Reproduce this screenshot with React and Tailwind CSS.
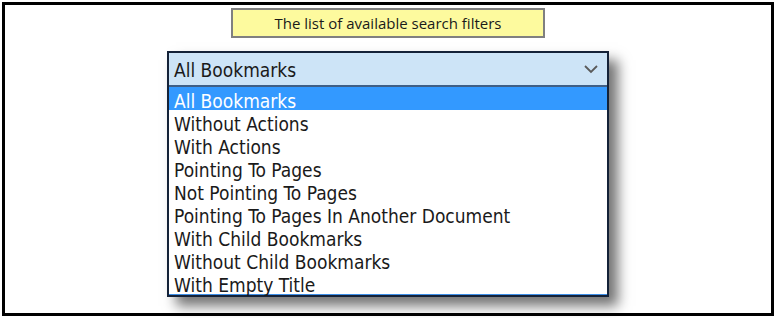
export default function App() {
  const items = [
    "All Bookmarks",
    "Without Actions",
    "With Actions",
    "Pointing To Pages",
    "Not Pointing To Pages",
    "Pointing To Pages In Another Document",
    "With Child Bookmarks",
    "Without Child Bookmarks",
    "With Empty Title",
  ];
  return (
    <div className="w-[774px] h-[318px] bg-white pt-[2px] pl-[2px]">
      <div className="w-[772px] h-[314px] border-[3px] border-black flex flex-col items-center">
        <div
          className="mt-[3px] w-[314px] h-[30px] bg-[#fdfa9e] border-2 border-[#808080] flex items-center justify-center text-[15px] text-[#1a1a1a]"
          style={{ fontFamily: '"Open Sans", "Noto Sans", sans-serif' }}
        >
          The list of available search filters
        </div>
        <div
          className="mt-[13px] w-[442px] border-2 border-[#142238] bg-white shadow-[9px_9px_12px_rgba(0,0,0,0.55)]"
          style={{ fontFamily: '"DejaVu Sans Condensed", "DejaVu Sans", sans-serif' }}
        >
          <div className="h-[34px] bg-[#cde4f7] border-b-2 border-[#3f5f86] flex items-center justify-between pl-[5px] pr-[8px]">
            <span className="text-[19px] text-[#1a1a1a] pt-[3px]">All Bookmarks</span>
            <svg width="16" height="10" viewBox="0 0 16 10" fill="none">
              <path d="M2 2 L8 8 L14 2" stroke="#5a5a5a" strokeWidth="1.8" />
            </svg>
          </div>
          <div className="flex flex-col border-b border-[#3d8ee6]">
            {items.map((t, i) => (
              <div
                key={t}
                className={
                  "h-[23px] flex items-center pl-[5px] pt-[5px] text-[19px] leading-none " +
                  (i === 0 ? "bg-[#3399ff] text-white" : "text-[#1a1a1a]")
                }
              >
                {t}
              </div>
            ))}
          </div>
        </div>
      </div>
    </div>
  );
}
